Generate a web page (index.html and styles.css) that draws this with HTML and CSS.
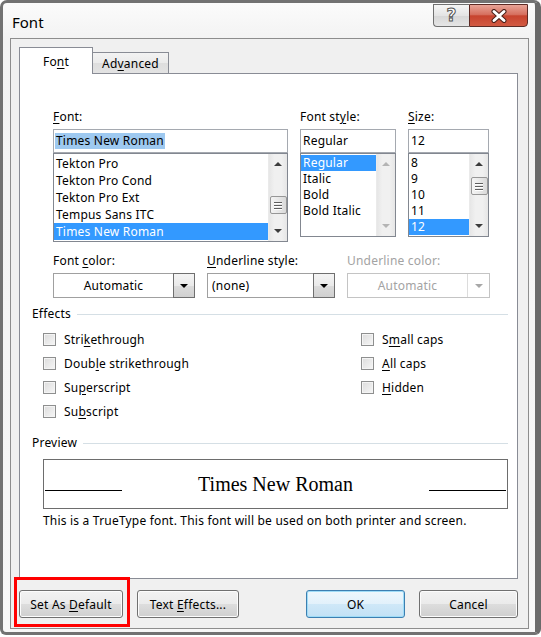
FILE: index.html
```html
<!DOCTYPE html>
<html lang="en">
<head>
  <meta charset="UTF-8" />
  <title>Font</title>
  <link rel="stylesheet" href="styles.css">
</head>
<body>

  <div class="window">

    <!-- TITLE BAR -->
    <div class="titlebar">
      <span class="title">Font</span>
      <div class="caption-buttons">
        <div class="cap-btn help"><span>?</span></div>
        <div class="cap-btn close">
          <svg width="16" height="14" viewBox="0 0 16 14">
            <path d="M3 2.5 L13 11.5 M13 2.5 L3 11.5" stroke="#4a2019" stroke-width="5" stroke-linecap="round" fill="none"/>
            <path d="M3 2.5 L13 11.5 M13 2.5 L3 11.5" stroke="#ffffff" stroke-width="3" stroke-linecap="round" fill="none"/>
          </svg>
        </div>
      </div>
    </div>

    <div class="client">

      <!-- TABS -->
      <div class="tabs">
        <div class="tab active">Fo<u>n</u>t</div>
        <div class="tab">Ad<u>v</u>anced</div>
      </div>

      <div class="tab-panel">

        <div class="pickers">
          <div class="picker">
            <div class="field-label"><u>F</u>ont:</div>
            <div class="textbox"><span class="selected-text">Times New Roman</span></div>
            <div class="listbox tall">
              <div class="items rows-17">
                <div class="item">Tekton Pro</div>
                <div class="item">Tekton Pro Cond</div>
                <div class="item">Tekton Pro Ext</div>
                <div class="item">Tempus Sans ITC</div>
                <div class="item selected">Times New Roman</div>
              </div>
              <div class="vscroll">
                <span class="arrow up"></span>
                <span class="thumb thumb-font"><i></i><i></i><i></i></span>
                <span class="arrow down"></span>
              </div>
            </div>
          </div>

          <div class="picker">
            <div class="field-label">Font st<u>y</u>le:</div>
            <div class="textbox"><span class="plain-text">Regular</span></div>
            <div class="listbox">
              <div class="items">
                <div class="item selected">Regular</div>
                <div class="item">Italic</div>
                <div class="item">Bold</div>
                <div class="item">Bold Italic</div>
              </div>
              <div class="vscroll disabled">
                <span class="arrow up"></span>
                <span class="arrow down"></span>
              </div>
            </div>
          </div>

          <div class="picker">
            <div class="field-label"><u>S</u>ize:</div>
            <div class="textbox"><span class="plain-text">12</span></div>
            <div class="listbox">
              <div class="items">
                <div class="item">8</div>
                <div class="item">9</div>
                <div class="item">10</div>
                <div class="item">11</div>
                <div class="item selected">12</div>
              </div>
              <div class="vscroll">
                <span class="arrow up"></span>
                <span class="thumb thumb-size"><i></i><i></i><i></i></span>
                <span class="arrow down"></span>
              </div>
            </div>
          </div>
        </div>

        <div class="combos">
          <div class="combo-field color-field">
            <div class="field-label">Font <u>c</u>olor:</div>
            <div class="combo centered">
              <span class="combo-text">Automatic</span>
              <span class="combo-btn"><i class="tri"></i></span>
            </div>
          </div>
          <div class="combo-field style-field">
            <div class="field-label"><u>U</u>nderline style:</div>
            <div class="combo">
              <span class="combo-text">(none)</span>
              <span class="combo-btn"><i class="tri"></i></span>
            </div>
          </div>
          <div class="combo-field ucolor-field disabled">
            <div class="field-label">Underline color:</div>
            <div class="combo centered">
              <span class="combo-text">Automatic</span>
              <span class="combo-btn"><i class="tri"></i></span>
            </div>
          </div>
        </div>

        <!-- EFFECTS -->
        <div class="group effects-group">
          <div class="group-title"><span>Effects</span></div>
          <div class="effects">
            <div class="check"><span class="box"></span>Stri<u>k</u>ethrough</div>
            <div class="check"><span class="box"></span>Doub<u>l</u>e strikethrough</div>
            <div class="check"><span class="box"></span>Su<u>p</u>erscript</div>
            <div class="check"><span class="box"></span>Su<u>b</u>script</div>
            <div class="check"><span class="box"></span>S<u>m</u>all caps</div>
            <div class="check"><span class="box"></span><u>A</u>ll caps</div>
            <div class="check"><span class="box"></span><u>H</u>idden</div>
          </div>
        </div>

        <!-- PREVIEW -->
        <div class="group preview-group">
          <div class="group-title"><span>Preview</span></div>
          <div class="preview-box">
            <span class="rule"></span>
            <span class="preview-text">Times New Roman</span>
            <span class="rule"></span>
          </div>
          <p class="note">This is a TrueType font. This font will be used on both printer and screen.</p>
        </div>

      </div>

      <!-- DIALOG BUTTONS -->
      <div class="buttons">
        <div class="marked">
          <button class="btn btn-default-set">Set As <u>D</u>efault</button>
          <span class="highlight"></span>
        </div>
        <button class="btn btn-effects">Text <u>E</u>ffects...</button>
        <button class="btn btn-ok">OK</button>
        <button class="btn btn-cancel">Cancel</button>
      </div>

    </div>
  </div>

</body>
</html>
```

FILE: styles.css
```css
* {
  box-sizing: border-box;
}

body {
  margin: 0;
  background: #ffffff;
  font-family: 'Noto Sans', sans-serif;
  font-size: 12px;
  letter-spacing: 0.2px;
  color: #000000;
}

u {
  text-decoration: underline;
  text-underline-offset: 2px;
}

/* window frame */
.window {
  width: 541px;
  height: 635px;
  border: 3px solid #727272;
  border-right-width: 6px;
  border-right-color: #6a6a6a;
  border-radius: 7px 7px 6px 6px;
  background: linear-gradient(to bottom, #fbfbfb, #f3f3f3 36px, #f7f7f7);
  padding: 0 6px 3px 7px;
  display: flex;
  flex-direction: column;
}

.titlebar {
  height: 35px;
  display: flex;
  align-items: flex-start;
  padding-left: 2px;
}

.title {
  font-size: 15px;
  letter-spacing: 0;
  margin-top: 9px;
  color: #000;
}

.caption-buttons {
  margin-left: auto;
  margin-right: 1px;
  margin-top: 1px;
  display: flex;
}

.cap-btn {
  height: 23px;
  border: 1px solid #707070;
  display: flex;
  align-items: center;
  justify-content: center;
}

.help {
  width: 36px;
  border-right: none;
  border-radius: 0 0 0 4px;
  background: linear-gradient(to bottom, #f6f6f6, #e4e4e4 50%, #d6d6d6 51%, #e6e6e6);
}

.help span {
  font-family: 'DejaVu Sans', sans-serif;
  font-size: 17px;
  font-weight: bold;
  color: #ffffff;
  -webkit-text-stroke: 1px #555555;
  line-height: 1;
}

.close {
  width: 59px;
  border-color: #5c2a24;
  border-radius: 0 0 4px 0;
  background: linear-gradient(to bottom, #e8a497, #d6705f 45%, #c7432e 52%, #d25a42);
}

/* client area */
.client {
  flex: 1;
  border: 1px solid #8d8d8d;
  background: #f0f0f0;
  padding: 8px 10px 10px 8px;
  display: flex;
  flex-direction: column;
}

.tabs {
  height: 26px;
  display: flex;
  align-items: flex-end;
}

.tab {
  border: 1px solid #898c95;
  border-bottom: none;
  text-align: center;
  line-height: 16px;
}

.tab.active {
  width: 74px;
  height: 27px;
  padding-top: 6px;
  margin-bottom: -1px;
  background: #ffffff;
  position: relative;
  z-index: 1;
}

.tab:not(.active) {
  width: 76px;
  height: 21px;
  padding-top: 3px;
  border-left: none;
  background: linear-gradient(to bottom, #f3f3f3, #ebebeb 50%, #dedede 51%, #e3e3e3);
}

.tab-panel {
  flex: 1;
  border: 1px solid #898c95;
  background: #ffffff;
  padding: 35px 9px 0 12px;
}

.field-label {
  height: 16px;
  line-height: 16px;
  margin-bottom: 4px;
  white-space: nowrap;
}

/* font / style / size pickers */
.pickers {
  display: grid;
  grid-template-columns: 235px 96px 81px;
  column-gap: 12px;
  margin-left: 21px;
  align-items: start;
}

.textbox {
  height: 24px;
  border: 1px solid #a5a9b0;
  padding-left: 1px;
  display: flex;
  align-items: center;
}

.selected-text,
.plain-text {
  padding: 0 1px;
  line-height: 16px;
}

.selected-text {
  background: #9ec9f0;
}

.listbox {
  height: 84px;
  border: 1px solid #828790;
  display: flex;
}

.listbox.tall {
  height: 89px;
}

.items {
  flex: 1;
  padding-top: 1px;
}

.item {
  height: 16px;
  line-height: 16px;
  padding-left: 2px;
  white-space: nowrap;
}

.rows-17 .item {
  height: 17px;
  line-height: 17px;
}

.item.selected {
  background: #3399ff;
  color: #ffffff;
}

.vscroll {
  width: 19px;
  display: flex;
  flex-direction: column;
  align-items: center;
  background: linear-gradient(to right, #e6e6e6, #f0f0f0 30%, #f0f0f0 70%, #e6e6e6);
  border-left: 1px solid #eaeaea;
}

.arrow {
  height: 20px;
  width: 100%;
  display: flex;
  align-items: center;
  justify-content: center;
}

.arrow::after {
  content: "";
  border-left: 4px solid transparent;
  border-right: 4px solid transparent;
}

.arrow.up::after {
  border-bottom: 4px solid #3c3c3c;
}

.arrow.down {
  margin-top: auto;
}

.arrow.down::after {
  border-top: 4px solid #3c3c3c;
}

.vscroll.disabled .arrow.up::after {
  border-bottom-color: #b4b4b4;
}

.vscroll.disabled .arrow.down::after {
  border-top-color: #b4b4b4;
}

.thumb {
  width: 17px;
  height: 18px;
  border: 1px solid #979797;
  border-radius: 2px;
  background: linear-gradient(to right, #f4f4f4, #e8e8e8 50%, #d9d9d9);
  display: flex;
  flex-direction: column;
  align-items: center;
  justify-content: center;
  gap: 2px;
}

.thumb i {
  width: 8px;
  height: 1px;
  background: #5e5e5e;
  box-shadow: 0 1px 0 #ffffff;
}

.thumb-font {
  margin-top: 22px;
}

.thumb-size {
  margin-top: 3px;
}

/* combo boxes */
.combos {
  display: flex;
  gap: 12px;
  margin: 11px 0 0 21px;
}

.color-field {
  width: 142px;
}

.style-field {
  width: 128px;
}

.ucolor-field {
  width: 143px;
}

.combo {
  height: 25px;
  border: 1px solid #a0a0a0;
  display: flex;
  align-items: stretch;
}

.combo-text {
  flex: 1;
  padding-left: 4px;
  display: flex;
  align-items: center;
}

.combo.centered .combo-text {
  justify-content: center;
  padding-left: 0;
}

.combo-btn {
  width: 22px;
  margin: -1px -1px -1px 0;
  border: 1px solid #6f6f6f;
  background: linear-gradient(to bottom, #f4f4f4, #eaeaea 50%, #dcdcdc 51%, #d0d0d0);
  display: flex;
  align-items: center;
  justify-content: center;
}

.tri {
  border-left: 4px solid transparent;
  border-right: 4px solid transparent;
  border-top: 4px solid #000000;
}

.disabled .field-label,
.disabled .combo-text {
  color: #a3a3a3;
}

.disabled .combo {
  border-color: #c4c4c4;
}

.disabled .combo-btn {
  margin: 0;
  border: none;
  border-left: 1px solid #dcdcdc;
  background: #ffffff;
}

.disabled .tri {
  border-top-color: #a8a8a8;
}

/* group boxes */
.group-title {
  height: 16px;
  line-height: 16px;
  display: flex;
  align-items: center;
  gap: 6px;
}

.group-title::after {
  content: "";
  flex: 1;
  height: 1px;
  background: #d5dfe5;
}

.effects-group {
  margin-top: 8px;
}

.effects {
  margin: 5px 0 0 11px;
  display: grid;
  grid-template-columns: 318px 1fr;
  grid-template-rows: repeat(4, 24px);
  grid-auto-flow: column;
}

.check {
  display: flex;
  align-items: center;
}

.box {
  width: 13px;
  height: 13px;
  margin-right: 8px;
  border: 1px solid #8e8f8f;
  background: linear-gradient(135deg, #dcdcdc, #f6f6f6);
  box-shadow: inset 0 0 0 1px #f4f4f4;
}

.preview-group {
  margin-top: 12px;
}

.preview-box {
  margin: 8px 0 0 11px;
  height: 50px;
  border: 1px solid #6d6d6d;
  padding: 0 1px 12px 1px;
  display: flex;
  align-items: flex-end;
  justify-content: space-between;
}

.preview-text {
  font-family: 'Liberation Serif', serif;
  font-size: 20px;
  letter-spacing: 0;
  line-height: 24px;
}

.rule {
  width: 77px;
  height: 1px;
  margin-bottom: 5px;
  background: #000000;
}

.note {
  margin: 4px 0 0 11px;
  line-height: 16px;
}

/* dialog buttons */
.buttons {
  margin-top: 11px;
  display: flex;
  gap: 14px;
}

.btn {
  height: 28px;
  padding: 0;
  border: 1px solid #707070;
  border-radius: 3px;
  background: linear-gradient(to bottom, #f2f2f2, #ebebeb 50%, #dddddd 51%, #cfcfcf);
  font-family: inherit;
  font-size: 12px;
  letter-spacing: inherit;
  color: #000;
  box-shadow: inset 0 0 0 1px #fcfcfc;
}

.btn-default-set {
  width: 104px;
}

.btn-effects {
  width: 102px;
}

.btn-ok {
  width: 99px;
  margin-left: auto;
  border-color: #3c7fb1;
  box-shadow: inset 0 0 0 1px #9fdcf7;
  background: linear-gradient(to bottom, #eef7fc, #e2f1fb 50%, #cfe8f8 51%, #c2e1f5);
}

.btn-cancel {
  width: 99px;
}

.marked {
  position: relative;
  display: flex;
}

.highlight {
  position: absolute;
  left: -5px;
  top: -13px;
  right: -7px;
  bottom: -9px;
  border: 3px solid #ff0000;
}
```
